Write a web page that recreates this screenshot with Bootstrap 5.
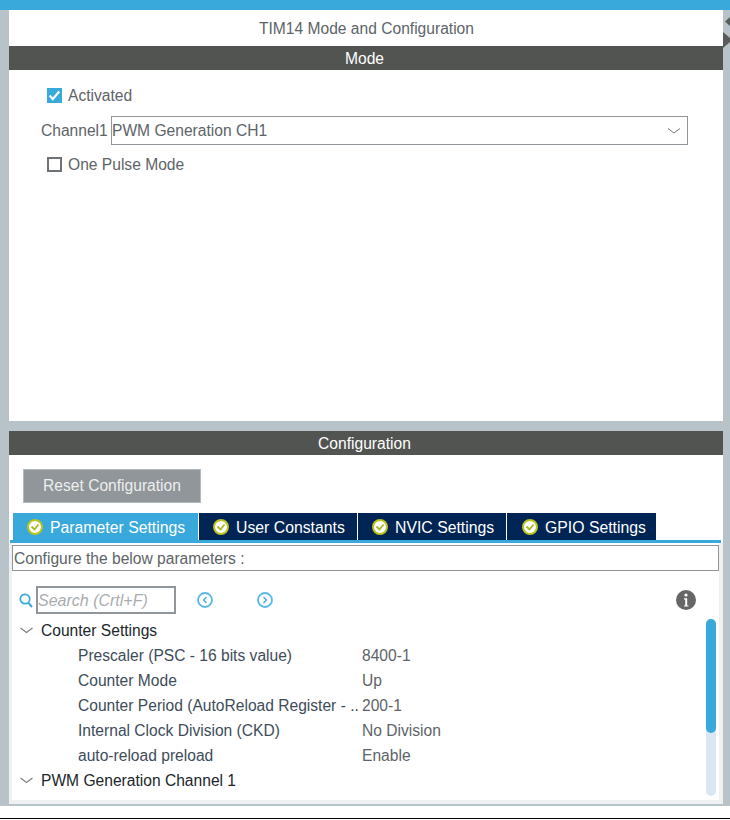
<!DOCTYPE html>
<html lang="en">
<head>
<meta charset="utf-8">
<title>TIM14 Mode and Configuration</title>
<link href="https://cdn.jsdelivr.net/npm/bootstrap@5.3.0/dist/css/bootstrap.min.css" rel="stylesheet">
<style>
html, body { background: #fff; }
body { font-family: "Liberation Sans", Arial, sans-serif; font-size: 15.6px; color: #5d6468; width: 730px; height: 820px; overflow: hidden; position: relative; }
.app-frame { background: #b7c3c9; height: 806px; display: flex; flex-direction: column; }
.top-strip { height: 10px; background: #39a9dc; flex: none; }
.pane { background: #fff; margin: 0 7px 0 9px; }
.mode-pane { height: 411px; margin-bottom: 10px; flex: none; }
.cfg-pane { height: 373px; flex: none; display: flex; flex-direction: column; }
.pane-title { height: 36px; line-height: 38px; text-align: center; padding-left: 1px; }
.pane-head { height: 24px; line-height: 26px; background: #525452; color: #fff; text-align: center; padding-right: 3px; flex: none; }
.mode-body { padding: 13px 35px 0 32px; }
.check-row { display: flex; align-items: center; gap: 6px; height: 25px; padding-left: 6px; margin: 0; }
.check-row .form-check-input { width: 15px; height: 15px; margin: 0; border-radius: 0; flex: none; }
.check-row .form-check-input:checked { background-color: #39a9dc; border-color: #39a9dc;
  background-image: url("data:image/svg+xml,%3csvg xmlns='http://www.w3.org/2000/svg' viewBox='0 0 15 15'%3e%3cpath fill='none' stroke='%23fff' stroke-width='2.2' d='M2.6 7.5l3.2 3.6 6.4-7.6'/%3e%3c/svg%3e"); background-size: 15px 15px; }
.check-row .form-check-input:not(:checked) { border: 2px solid #6e7275; }
.channel-row { display: flex; align-items: center; gap: 5px; margin: 8px 0 7px; }
.channel-row .form-label { margin: 0; width: 65px; flex: none; white-space: nowrap; }
.channel-row .form-select { height: 29px; padding: 0 30px 0 0; border: 1px solid #90969a; border-radius: 0; color: #5d6468; font-size: 15.6px; line-height: 27px;
  background-image: url("data:image/svg+xml,%3csvg xmlns='http://www.w3.org/2000/svg' viewBox='0 0 14 8'%3e%3cpath fill='none' stroke='%23777' stroke-width='1' d='M1 1.5l6 4.5 6-4.5'/%3e%3c/svg%3e"); background-size: 14px 8px; background-position: right 6px center; }
.cfg-upper { background: #fff; flex: none; display: flex; flex-direction: column; }
.reset-btn { align-self: flex-start; margin: 14px 0 10px 14px; width: 178px; height: 34px; padding: 0; background: #90969a; border: 1px solid #b3babe; border-radius: 0; color: #eceeef; font-size: 15.6px; line-height: 32px; }
.reset-btn:hover { background: #90969a; border-color: #b3babe; color: #eceeef; }
.tab-strip { border-bottom: 3px solid #39a9dc; margin: 0 2px 0 1px; padding-left: 3px; gap: 1px; height: 30px; flex-wrap: nowrap; flex: none; }
.tab-strip .nav-link { height: 27px; padding: 2px 0 0 14px; background: #002554; color: #fff; border-radius: 0; font-size: 15.8px; line-height: 25px; display: flex; align-items: center; gap: 7px; white-space: nowrap; }
.tab-strip .nav-link svg { margin-top: -2px; }
.tab-strip .nav-link.active { background: #39a9dc; color: #fff; }
.tab-a { width: 185px; } .tab-b { width: 158px; } .tab-c { width: 148px; } .tab-strip .nav-link.tab-d { width: 149px; padding-left: 15px; }
.cfg-lower { flex: 1 1 auto; min-height: 0; background: #eef0f1; padding: 0 4px 4px 3px; display: flex; flex-direction: column; }
.cfg-inner { flex: 1 1 auto; min-height: 0; background: #fff; display: flex; flex-direction: column; }
.notice { margin-top: 2px; height: 26px; line-height: 26px; border: 1px solid #90969a; padding-left: 1px; flex: none; }
.search-row { display: flex; align-items: center; height: 28px; margin-top: 15px; padding-left: 7px; flex: none; }
.search-row .form-control { width: 140px; height: 28px; margin-left: 3px; padding: 1px 0 0 0; border: 2px solid #90969a; border-radius: 0; font-size: 16px; font-style: italic; }
.search-row .form-control::placeholder { color: #a9adb0; }
.nav-round { display: block; flex: none; }
.nav-prev { margin-left: 21px; } .nav-next { margin-left: 43px; } .info-mark { margin-left: 402px; }
.tree-wrap { display: flex; margin-top: 4px; min-height: 0; flex: 1 1 auto; }
.tree-list { flex: 1 1 auto; min-width: 0; }
.tree-group, .tree-item { height: 25px; line-height: 25px; white-space: nowrap; display: flex; align-items: center; }
.tree-group { color: #20262a; padding-left: 8px; gap: 8px; }
.tree-item { color: #3e4c5a; padding-left: 66px; }
.tree-name { width: 284px; flex: none; overflow: hidden; }
.tree-val { color: #5d6468; }
.scroll-track { width: 10px; height: 177px; margin: 1px 3px 0 0; background: #d9e7f4; border-radius: 5px; flex: none; }
.scroll-thumb { height: 114px; background: #39a9dc; border-radius: 5px; }
.edge-mark { position: absolute; left: 723px; top: 16px; }
.base-rule { position: absolute; left: 0; right: 0; top: 818px; height: 1px; background: #000; }
</style>
</head>
<body>
<div class="app-frame">
  <div class="top-strip"></div>
  <section class="pane mode-pane">
    <div class="pane-title">TIM14 Mode and Configuration</div>
    <div class="pane-head">Mode</div>
    <div class="mode-body">
      <label class="check-row"><input class="form-check-input" type="checkbox" checked><span>Activated</span></label>
      <div class="channel-row"><label class="form-label">Channel1</label>
        <select class="form-select"><option>PWM Generation CH1</option></select></div>
      <label class="check-row"><input class="form-check-input" type="checkbox"><span>One Pulse Mode</span></label>
    </div>
  </section>
  <section class="pane cfg-pane">
    <div class="pane-head">Configuration</div>
    <div class="cfg-upper">
      <button type="button" class="btn reset-btn">Reset Configuration</button>
      <ul class="nav tab-strip">
        <li class="nav-item"><a class="nav-link active tab-a" href="#"><svg width="16" height="16" viewBox="0 0 16 16"><circle cx="8" cy="8" r="7" fill="#fff" stroke="#b9c41c" stroke-width="2"/><path d="M4.5 7.5l3 3 4-5" fill="none" stroke="#a9b81e" stroke-width="1.8"/></svg>Parameter Settings</a></li>
        <li class="nav-item"><a class="nav-link tab-b" href="#"><svg width="16" height="16" viewBox="0 0 16 16"><circle cx="8" cy="8" r="7" fill="#fff" stroke="#b9c41c" stroke-width="2"/><path d="M4.5 7.5l3 3 4-5" fill="none" stroke="#a9b81e" stroke-width="1.8"/></svg>User Constants</a></li>
        <li class="nav-item"><a class="nav-link tab-c" href="#"><svg width="16" height="16" viewBox="0 0 16 16"><circle cx="8" cy="8" r="7" fill="#fff" stroke="#b9c41c" stroke-width="2"/><path d="M4.5 7.5l3 3 4-5" fill="none" stroke="#a9b81e" stroke-width="1.8"/></svg>NVIC Settings</a></li>
        <li class="nav-item"><a class="nav-link tab-d" href="#"><svg width="16" height="16" viewBox="0 0 16 16"><circle cx="8" cy="8" r="7" fill="#fff" stroke="#b9c41c" stroke-width="2"/><path d="M4.5 7.5l3 3 4-5" fill="none" stroke="#a9b81e" stroke-width="1.8"/></svg>GPIO Settings</a></li>
      </ul>
    </div>
    <div class="cfg-lower">
      <div class="cfg-inner">
        <div class="notice">Configure the below parameters :</div>
        <div class="search-row">
          <svg width="14" height="15" viewBox="0 0 14 15"><circle cx="6" cy="6" r="4.7" fill="none" stroke="#39a9dc" stroke-width="1.7"/><path d="M9.5 10l3.5 4" stroke="#39a9dc" stroke-width="2"/></svg>
          <input class="form-control" type="text" placeholder="Search (Crtl+F)">
          <svg class="nav-round nav-prev" width="16" height="16" viewBox="0 0 16 16"><circle cx="8" cy="8" r="7" fill="none" stroke="#5ab8e4" stroke-width="1.8"/><path d="M9.5 5L6.5 8l3 3" fill="none" stroke="#39a9dc" stroke-width="1.3"/></svg>
          <svg class="nav-round nav-next" width="18" height="16" viewBox="0 0 18 16"><circle cx="9" cy="8" r="7" fill="none" stroke="#5ab8e4" stroke-width="1.8"/><path d="M7.5 5l3 3-3 3" fill="none" stroke="#39a9dc" stroke-width="1.3"/></svg>
          <svg class="info-mark" width="20" height="20" viewBox="0 0 20 20"><circle cx="10" cy="10" r="10" fill="#666"/><circle cx="10" cy="5" r="1.6" fill="#fff"/><path d="M8 8.2h3.2v7.2H12.4v1.2H8v-1.2h1.2V9.4H8z" fill="#fff"/></svg>
        </div>
        <div class="tree-wrap">
          <div class="tree-list">
            <div class="tree-group"><svg width="13" height="7" viewBox="0 0 13 7"><path d="M.5 1l6 4.6 6-4.6" fill="none" stroke="#7d8285" stroke-width="1.2"/></svg>Counter Settings</div>
            <div class="tree-item"><span class="tree-name">Prescaler (PSC - 16 bits value)</span><span class="tree-val">8400-1</span></div>
            <div class="tree-item"><span class="tree-name">Counter Mode</span><span class="tree-val">Up</span></div>
            <div class="tree-item"><span class="tree-name">Counter Period (AutoReload Register - ..</span><span class="tree-val">200-1</span></div>
            <div class="tree-item"><span class="tree-name">Internal Clock Division (CKD)</span><span class="tree-val">No Division</span></div>
            <div class="tree-item"><span class="tree-name">auto-reload preload</span><span class="tree-val">Enable</span></div>
            <div class="tree-group"><svg width="13" height="7" viewBox="0 0 13 7"><path d="M.5 1l6 4.6 6-4.6" fill="none" stroke="#7d8285" stroke-width="1.2"/></svg>PWM Generation Channel 1</div>
          </div>
          <div class="scroll-track"><div class="scroll-thumb"></div></div>
        </div>
      </div>
    </div>
  </section>
</div>
<svg class="edge-mark" width="7" height="34" viewBox="0 0 7 34"><path d="M7 1L2 5.5 7 10z" fill="#5a5c5c"/><path d="M0 16l7 6v4l-7 6z" fill="#5a5c5c"/></svg>
<div class="base-rule"></div>
<script src="https://cdn.jsdelivr.net/npm/bootstrap@5.3.0/dist/js/bootstrap.bundle.min.js"></script>
</body>
</html>
